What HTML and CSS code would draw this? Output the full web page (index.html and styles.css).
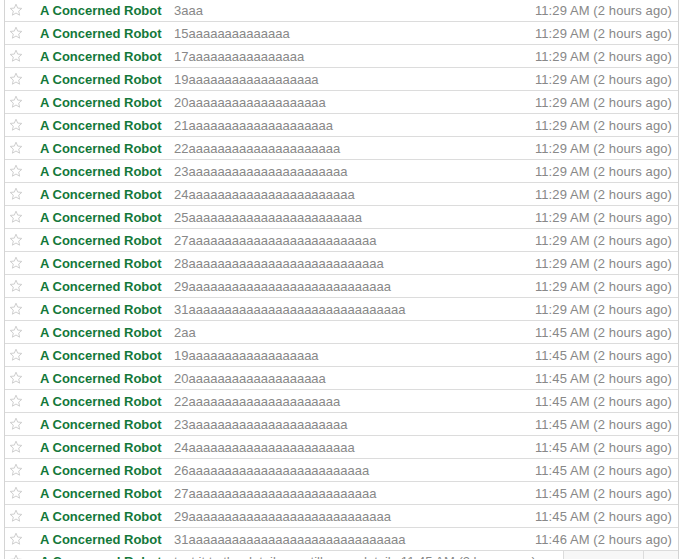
FILE: index.html
```html
<!DOCTYPE html>
<html>
<head>
<meta charset="utf-8">
<link rel="stylesheet" href="styles.css">
</head>
<body>
<div class="list" id="list"></div>
<script>
var rows = [
["3aaa","11:29"],["15aaaaaaaaaaaaaa","11:29"],["17aaaaaaaaaaaaaaaa","11:29"],
["19aaaaaaaaaaaaaaaaaa","11:29"],["20aaaaaaaaaaaaaaaaaaa","11:29"],["21aaaaaaaaaaaaaaaaaaaa","11:29"],
["22aaaaaaaaaaaaaaaaaaaaa","11:29"],["23aaaaaaaaaaaaaaaaaaaaaa","11:29"],["24aaaaaaaaaaaaaaaaaaaaaaa","11:29"],
["25aaaaaaaaaaaaaaaaaaaaaaaa","11:29"],["27aaaaaaaaaaaaaaaaaaaaaaaaaa","11:29"],["28aaaaaaaaaaaaaaaaaaaaaaaaaaa","11:29"],
["29aaaaaaaaaaaaaaaaaaaaaaaaaaaa","11:29"],["31aaaaaaaaaaaaaaaaaaaaaaaaaaaaaa","11:29"],["2aa","11:45"],
["19aaaaaaaaaaaaaaaaaa","11:45"],["20aaaaaaaaaaaaaaaaaaa","11:45"],["22aaaaaaaaaaaaaaaaaaaaa","11:45"],
["23aaaaaaaaaaaaaaaaaaaaaa","11:45"],["24aaaaaaaaaaaaaaaaaaaaaaa","11:45"],["26aaaaaaaaaaaaaaaaaaaaaaaaa","11:45"],
["27aaaaaaaaaaaaaaaaaaaaaaaaaa","11:45"],["29aaaaaaaaaaaaaaaaaaaaaaaaaaaa","11:45"],["31aaaaaaaaaaaaaaaaaaaaaaaaaaaaaa","11:46"]
];
var star = '<svg class="star" width="14" height="14" viewBox="0 0 14 14"><path d="M7 1.2 L8.7 5.1 L12.8 5.4 L9.7 8.1 L10.6 12.2 L7 10 L3.4 12.2 L4.3 8.1 L1.2 5.4 L5.3 5.1 Z" fill="none" stroke="#cfcfcf" stroke-width="1" stroke-linejoin="round"/></svg>';
var html = '';
rows.forEach(function(r){
  html += '<div class="row"><span class="star-cell">'+star+'</span><span class="from">A Concerned Robot</span><span class="subject">'+r[0]+'</span><span class="date">'+r[1]+' AM (2 hours ago)</span></div>';
});
html += '<div class="row last"><span class="star-cell">'+star+'</span><span class="from">A Concerned Robot</span><span class="subject">test it to the details. ... still more details 11:45 AM (2 hours ago)</span><span class="panel"><span class="cell wide"></span><span class="cell"></span></span></div>';
document.getElementById('list').innerHTML = html;
</script>
</body>
</html>
```
FILE: styles.css
```css
html, body {
  margin: 0;
  padding: 0;
  background: #fff;
  overflow: hidden;
}
body {
  font-family: "Liberation Sans", Arial, sans-serif;
  font-size: 13px;
}
.list {
  margin-left: 4px;
  margin-top: -1px;
  width: 673px;
  border-left: 1px solid #d4d4d4;
  border-right: 1px solid #d4d4d4;
}
.row {
  display: flex;
  align-items: center;
  height: 22px;
  border-bottom: 1px solid #dcdcdc;
  white-space: nowrap;
}
.star-cell {
  width: 35px;
  flex: none;
  display: flex;
  align-items: center;
  padding-left: 4px;
  box-sizing: border-box;
}
.star { display: block; }
.from {
  width: 134px;
  flex: none;
  font-weight: bold;
  color: #13783a;
}
.subject {
  flex: 1;
  color: #888;
  overflow: hidden;
}
.date {
  flex: none;
  color: #888;
  padding-right: 6px;
  letter-spacing: 0.1px;
}
.last {
  align-items: flex-start;
  padding-top: 3px;
  height: 30px;
}
.panel {
  flex: none;
  display: flex;
  width: 114px;
  height: 30px;
  margin-top: -3px;
  border-left: 1px solid #dcdcdc;
  background: #f7f7f7;
}
.cell { height: 100%; width: 34px; }
.cell.wide { width: 80px; border-right: 1px solid #dcdcdc; }
```
